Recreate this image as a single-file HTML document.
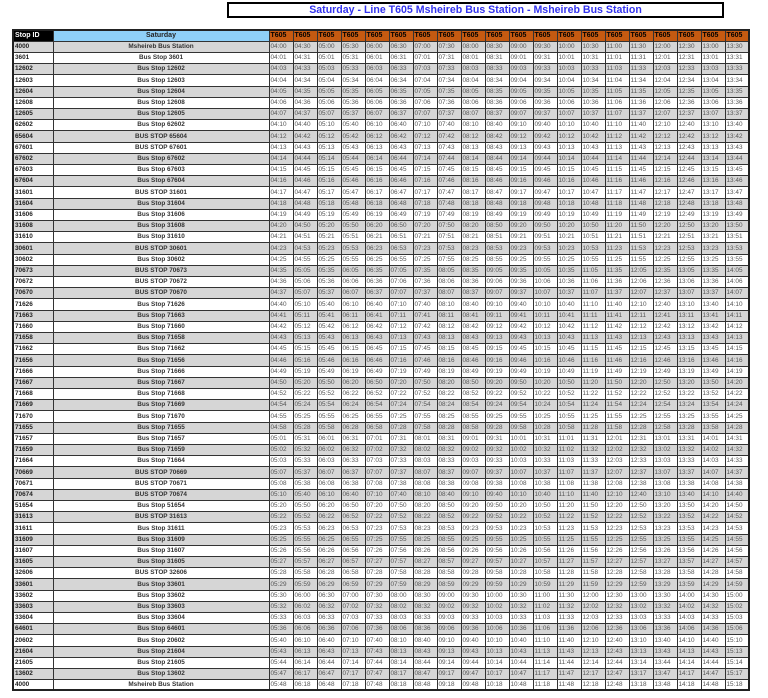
<!DOCTYPE html>
<html><head><meta charset="utf-8"><style>
*{margin:0;padding:0;box-sizing:border-box}
body{width:768px;height:698px;background:#fff;font-family:"Liberation Sans",Arial,sans-serif;position:relative;overflow:hidden}
.title{position:absolute;left:227px;top:2px;width:497px;height:16px;border:2px solid #000;color:#3333ee;font-weight:bold;font-size:10.6px;line-height:12px;text-align:center}
table{position:absolute;left:12px;top:29px;width:736px;border-collapse:collapse;table-layout:fixed;border:2px solid #222}
td{border:1px solid #333;height:11px;font-size:6.4px;line-height:9px;padding:0 1px;white-space:nowrap;overflow:hidden;color:#555}
tr:nth-child(5n) td{height:12px}
td:nth-child(1){font-weight:bold;color:#222}
td:nth-child(2){font-weight:bold;color:#333;text-align:center}
tr.g td{background:#d6d6d6}
tr.h td{height:11px;font-weight:bold;font-size:7px;color:#000;background:#c55a11}
tr.h td:nth-child(1){background:#000;color:#fff}
tr.h td:nth-child(2){background:#8fd0f8;color:#222}
</style></head><body>
<div class="title">Saturday - Line T605 Msheireb Bus Station - Msheireb Bus Station</div>
<table>
<colgroup><col style="width:40px"><col style="width:216px"><col span="20" style="width:24px"></colgroup>
<tr class="h"><td>Stop ID<td>Saturday<td>T605<td>T605<td>T605<td>T605<td>T605<td>T605<td>T605<td>T605<td>T605<td>T605<td>T605<td>T605<td>T605<td>T605<td>T605<td>T605<td>T605<td>T605<td>T605<td>T605
<tr class="g"><td>4000<td>Msheireb Bus Station<td>04:00<td>04:30<td>05:00<td>05:30<td>06:00<td>06:30<td>07:00<td>07:30<td>08:00<td>08:30<td>09:00<td>09:30<td>10:00<td>10:30<td>11:00<td>11:30<td>12:00<td>12:30<td>13:00<td>13:30
<tr><td>3601<td>Bus Stop 3601<td>04:01<td>04:31<td>05:01<td>05:31<td>06:01<td>06:31<td>07:01<td>07:31<td>08:01<td>08:31<td>09:01<td>09:31<td>10:01<td>10:31<td>11:01<td>11:31<td>12:01<td>12:31<td>13:01<td>13:31
<tr class="g"><td>12602<td>Bus Stop 12602<td>04:03<td>04:33<td>05:03<td>05:33<td>06:03<td>06:33<td>07:03<td>07:33<td>08:03<td>08:33<td>09:03<td>09:33<td>10:03<td>10:33<td>11:03<td>11:33<td>12:03<td>12:33<td>13:03<td>13:33
<tr><td>12603<td>Bus Stop 12603<td>04:04<td>04:34<td>05:04<td>05:34<td>06:04<td>06:34<td>07:04<td>07:34<td>08:04<td>08:34<td>09:04<td>09:34<td>10:04<td>10:34<td>11:04<td>11:34<td>12:04<td>12:34<td>13:04<td>13:34
<tr class="g"><td>12604<td>Bus Stop 12604<td>04:05<td>04:35<td>05:05<td>05:35<td>06:05<td>06:35<td>07:05<td>07:35<td>08:05<td>08:35<td>09:05<td>09:35<td>10:05<td>10:35<td>11:05<td>11:35<td>12:05<td>12:35<td>13:05<td>13:35
<tr><td>12608<td>Bus Stop 12608<td>04:06<td>04:36<td>05:06<td>05:36<td>06:06<td>06:36<td>07:06<td>07:36<td>08:06<td>08:36<td>09:06<td>09:36<td>10:06<td>10:36<td>11:06<td>11:36<td>12:06<td>12:36<td>13:06<td>13:36
<tr class="g"><td>12605<td>Bus Stop 12605<td>04:07<td>04:37<td>05:07<td>05:37<td>06:07<td>06:37<td>07:07<td>07:37<td>08:07<td>08:37<td>09:07<td>09:37<td>10:07<td>10:37<td>11:07<td>11:37<td>12:07<td>12:37<td>13:07<td>13:37
<tr><td>62602<td>Bus Stop 62602<td>04:10<td>04:40<td>05:10<td>05:40<td>06:10<td>06:40<td>07:10<td>07:40<td>08:10<td>08:40<td>09:10<td>09:40<td>10:10<td>10:40<td>11:10<td>11:40<td>12:10<td>12:40<td>13:10<td>13:40
<tr class="g"><td>65604<td>BUS STOP 65604<td>04:12<td>04:42<td>05:12<td>05:42<td>06:12<td>06:42<td>07:12<td>07:42<td>08:12<td>08:42<td>09:12<td>09:42<td>10:12<td>10:42<td>11:12<td>11:42<td>12:12<td>12:42<td>13:12<td>13:42
<tr><td>67601<td>BUS STOP 67601<td>04:13<td>04:43<td>05:13<td>05:43<td>06:13<td>06:43<td>07:13<td>07:43<td>08:13<td>08:43<td>09:13<td>09:43<td>10:13<td>10:43<td>11:13<td>11:43<td>12:13<td>12:43<td>13:13<td>13:43
<tr class="g"><td>67602<td>Bus Stop 67602<td>04:14<td>04:44<td>05:14<td>05:44<td>06:14<td>06:44<td>07:14<td>07:44<td>08:14<td>08:44<td>09:14<td>09:44<td>10:14<td>10:44<td>11:14<td>11:44<td>12:14<td>12:44<td>13:14<td>13:44
<tr><td>67603<td>Bus Stop 67603<td>04:15<td>04:45<td>05:15<td>05:45<td>06:15<td>06:45<td>07:15<td>07:45<td>08:15<td>08:45<td>09:15<td>09:45<td>10:15<td>10:45<td>11:15<td>11:45<td>12:15<td>12:45<td>13:15<td>13:45
<tr class="g"><td>67604<td>Bus Stop 67604<td>04:16<td>04:46<td>05:16<td>05:46<td>06:16<td>06:46<td>07:16<td>07:46<td>08:16<td>08:46<td>09:16<td>09:46<td>10:16<td>10:46<td>11:16<td>11:46<td>12:16<td>12:46<td>13:16<td>13:46
<tr><td>31601<td>BUS STOP 31601<td>04:17<td>04:47<td>05:17<td>05:47<td>06:17<td>06:47<td>07:17<td>07:47<td>08:17<td>08:47<td>09:17<td>09:47<td>10:17<td>10:47<td>11:17<td>11:47<td>12:17<td>12:47<td>13:17<td>13:47
<tr class="g"><td>31604<td>Bus Stop 31604<td>04:18<td>04:48<td>05:18<td>05:48<td>06:18<td>06:48<td>07:18<td>07:48<td>08:18<td>08:48<td>09:18<td>09:48<td>10:18<td>10:48<td>11:18<td>11:48<td>12:18<td>12:48<td>13:18<td>13:48
<tr><td>31606<td>Bus Stop 31606<td>04:19<td>04:49<td>05:19<td>05:49<td>06:19<td>06:49<td>07:19<td>07:49<td>08:19<td>08:49<td>09:19<td>09:49<td>10:19<td>10:49<td>11:19<td>11:49<td>12:19<td>12:49<td>13:19<td>13:49
<tr class="g"><td>31608<td>Bus Stop 31608<td>04:20<td>04:50<td>05:20<td>05:50<td>06:20<td>06:50<td>07:20<td>07:50<td>08:20<td>08:50<td>09:20<td>09:50<td>10:20<td>10:50<td>11:20<td>11:50<td>12:20<td>12:50<td>13:20<td>13:50
<tr><td>31610<td>Bus Stop 31610<td>04:21<td>04:51<td>05:21<td>05:51<td>06:21<td>06:51<td>07:21<td>07:51<td>08:21<td>08:51<td>09:21<td>09:51<td>10:21<td>10:51<td>11:21<td>11:51<td>12:21<td>12:51<td>13:21<td>13:51
<tr class="g"><td>30601<td>BUS STOP 30601<td>04:23<td>04:53<td>05:23<td>05:53<td>06:23<td>06:53<td>07:23<td>07:53<td>08:23<td>08:53<td>09:23<td>09:53<td>10:23<td>10:53<td>11:23<td>11:53<td>12:23<td>12:53<td>13:23<td>13:53
<tr><td>30602<td>Bus Stop 30602<td>04:25<td>04:55<td>05:25<td>05:55<td>06:25<td>06:55<td>07:25<td>07:55<td>08:25<td>08:55<td>09:25<td>09:55<td>10:25<td>10:55<td>11:25<td>11:55<td>12:25<td>12:55<td>13:25<td>13:55
<tr class="g"><td>70673<td>BUS STOP 70673<td>04:35<td>05:05<td>05:35<td>06:05<td>06:35<td>07:05<td>07:35<td>08:05<td>08:35<td>09:05<td>09:35<td>10:05<td>10:35<td>11:05<td>11:35<td>12:05<td>12:35<td>13:05<td>13:35<td>14:05
<tr><td>70672<td>BUS STOP 70672<td>04:36<td>05:06<td>05:36<td>06:06<td>06:36<td>07:06<td>07:36<td>08:06<td>08:36<td>09:06<td>09:36<td>10:06<td>10:36<td>11:06<td>11:36<td>12:06<td>12:36<td>13:06<td>13:36<td>14:06
<tr class="g"><td>70670<td>BUS STOP 70670<td>04:37<td>05:07<td>05:37<td>06:07<td>06:37<td>07:07<td>07:37<td>08:07<td>08:37<td>09:07<td>09:37<td>10:07<td>10:37<td>11:07<td>11:37<td>12:07<td>12:37<td>13:07<td>13:37<td>14:07
<tr><td>71626<td>Bus Stop 71626<td>04:40<td>05:10<td>05:40<td>06:10<td>06:40<td>07:10<td>07:40<td>08:10<td>08:40<td>09:10<td>09:40<td>10:10<td>10:40<td>11:10<td>11:40<td>12:10<td>12:40<td>13:10<td>13:40<td>14:10
<tr class="g"><td>71663<td>Bus Stop 71663<td>04:41<td>05:11<td>05:41<td>06:11<td>06:41<td>07:11<td>07:41<td>08:11<td>08:41<td>09:11<td>09:41<td>10:11<td>10:41<td>11:11<td>11:41<td>12:11<td>12:41<td>13:11<td>13:41<td>14:11
<tr><td>71660<td>Bus Stop 71660<td>04:42<td>05:12<td>05:42<td>06:12<td>06:42<td>07:12<td>07:42<td>08:12<td>08:42<td>09:12<td>09:42<td>10:12<td>10:42<td>11:12<td>11:42<td>12:12<td>12:42<td>13:12<td>13:42<td>14:12
<tr class="g"><td>71658<td>Bus Stop 71658<td>04:43<td>05:13<td>05:43<td>06:13<td>06:43<td>07:13<td>07:43<td>08:13<td>08:43<td>09:13<td>09:43<td>10:13<td>10:43<td>11:13<td>11:43<td>12:13<td>12:43<td>13:13<td>13:43<td>14:13
<tr><td>71662<td>Bus Stop 71662<td>04:45<td>05:15<td>05:45<td>06:15<td>06:45<td>07:15<td>07:45<td>08:15<td>08:45<td>09:15<td>09:45<td>10:15<td>10:45<td>11:15<td>11:45<td>12:15<td>12:45<td>13:15<td>13:45<td>14:15
<tr class="g"><td>71656<td>Bus Stop 71656<td>04:46<td>05:16<td>05:46<td>06:16<td>06:46<td>07:16<td>07:46<td>08:16<td>08:46<td>09:16<td>09:46<td>10:16<td>10:46<td>11:16<td>11:46<td>12:16<td>12:46<td>13:16<td>13:46<td>14:16
<tr><td>71666<td>Bus Stop 71666<td>04:49<td>05:19<td>05:49<td>06:19<td>06:49<td>07:19<td>07:49<td>08:19<td>08:49<td>09:19<td>09:49<td>10:19<td>10:49<td>11:19<td>11:49<td>12:19<td>12:49<td>13:19<td>13:49<td>14:19
<tr class="g"><td>71667<td>Bus Stop 71667<td>04:50<td>05:20<td>05:50<td>06:20<td>06:50<td>07:20<td>07:50<td>08:20<td>08:50<td>09:20<td>09:50<td>10:20<td>10:50<td>11:20<td>11:50<td>12:20<td>12:50<td>13:20<td>13:50<td>14:20
<tr><td>71668<td>Bus Stop 71668<td>04:52<td>05:22<td>05:52<td>06:22<td>06:52<td>07:22<td>07:52<td>08:22<td>08:52<td>09:22<td>09:52<td>10:22<td>10:52<td>11:22<td>11:52<td>12:22<td>12:52<td>13:22<td>13:52<td>14:22
<tr class="g"><td>71669<td>Bus Stop 71669<td>04:54<td>05:24<td>05:54<td>06:24<td>06:54<td>07:24<td>07:54<td>08:24<td>08:54<td>09:24<td>09:54<td>10:24<td>10:54<td>11:24<td>11:54<td>12:24<td>12:54<td>13:24<td>13:54<td>14:24
<tr><td>71670<td>Bus Stop 71670<td>04:55<td>05:25<td>05:55<td>06:25<td>06:55<td>07:25<td>07:55<td>08:25<td>08:55<td>09:25<td>09:55<td>10:25<td>10:55<td>11:25<td>11:55<td>12:25<td>12:55<td>13:25<td>13:55<td>14:25
<tr class="g"><td>71655<td>Bus Stop 71655<td>04:58<td>05:28<td>05:58<td>06:28<td>06:58<td>07:28<td>07:58<td>08:28<td>08:58<td>09:28<td>09:58<td>10:28<td>10:58<td>11:28<td>11:58<td>12:28<td>12:58<td>13:28<td>13:58<td>14:28
<tr><td>71657<td>Bus Stop 71657<td>05:01<td>05:31<td>06:01<td>06:31<td>07:01<td>07:31<td>08:01<td>08:31<td>09:01<td>09:31<td>10:01<td>10:31<td>11:01<td>11:31<td>12:01<td>12:31<td>13:01<td>13:31<td>14:01<td>14:31
<tr class="g"><td>71659<td>Bus Stop 71659<td>05:02<td>05:32<td>06:02<td>06:32<td>07:02<td>07:32<td>08:02<td>08:32<td>09:02<td>09:32<td>10:02<td>10:32<td>11:02<td>11:32<td>12:02<td>12:32<td>13:02<td>13:32<td>14:02<td>14:32
<tr><td>71664<td>Bus Stop 71664<td>05:03<td>05:33<td>06:03<td>06:33<td>07:03<td>07:33<td>08:03<td>08:33<td>09:03<td>09:33<td>10:03<td>10:33<td>11:03<td>11:33<td>12:03<td>12:33<td>13:03<td>13:33<td>14:03<td>14:33
<tr class="g"><td>70669<td>BUS STOP 70669<td>05:07<td>05:37<td>06:07<td>06:37<td>07:07<td>07:37<td>08:07<td>08:37<td>09:07<td>09:37<td>10:07<td>10:37<td>11:07<td>11:37<td>12:07<td>12:37<td>13:07<td>13:37<td>14:07<td>14:37
<tr><td>70671<td>BUS STOP 70671<td>05:08<td>05:38<td>06:08<td>06:38<td>07:08<td>07:38<td>08:08<td>08:38<td>09:08<td>09:38<td>10:08<td>10:38<td>11:08<td>11:38<td>12:08<td>12:38<td>13:08<td>13:38<td>14:08<td>14:38
<tr class="g"><td>70674<td>BUS STOP 70674<td>05:10<td>05:40<td>06:10<td>06:40<td>07:10<td>07:40<td>08:10<td>08:40<td>09:10<td>09:40<td>10:10<td>10:40<td>11:10<td>11:40<td>12:10<td>12:40<td>13:10<td>13:40<td>14:10<td>14:40
<tr><td>51654<td>Bus Stop 51654<td>05:20<td>05:50<td>06:20<td>06:50<td>07:20<td>07:50<td>08:20<td>08:50<td>09:20<td>09:50<td>10:20<td>10:50<td>11:20<td>11:50<td>12:20<td>12:50<td>13:20<td>13:50<td>14:20<td>14:50
<tr class="g"><td>31613<td>BUS STOP 31613<td>05:22<td>05:52<td>06:22<td>06:52<td>07:22<td>07:52<td>08:22<td>08:52<td>09:22<td>09:52<td>10:22<td>10:52<td>11:22<td>11:52<td>12:22<td>12:52<td>13:22<td>13:52<td>14:22<td>14:52
<tr><td>31611<td>Bus Stop 31611<td>05:23<td>05:53<td>06:23<td>06:53<td>07:23<td>07:53<td>08:23<td>08:53<td>09:23<td>09:53<td>10:23<td>10:53<td>11:23<td>11:53<td>12:23<td>12:53<td>13:23<td>13:53<td>14:23<td>14:53
<tr class="g"><td>31609<td>Bus Stop 31609<td>05:25<td>05:55<td>06:25<td>06:55<td>07:25<td>07:55<td>08:25<td>08:55<td>09:25<td>09:55<td>10:25<td>10:55<td>11:25<td>11:55<td>12:25<td>12:55<td>13:25<td>13:55<td>14:25<td>14:55
<tr><td>31607<td>Bus Stop 31607<td>05:26<td>05:56<td>06:26<td>06:56<td>07:26<td>07:56<td>08:26<td>08:56<td>09:26<td>09:56<td>10:26<td>10:56<td>11:26<td>11:56<td>12:26<td>12:56<td>13:26<td>13:56<td>14:26<td>14:56
<tr class="g"><td>31605<td>Bus Stop 31605<td>05:27<td>05:57<td>06:27<td>06:57<td>07:27<td>07:57<td>08:27<td>08:57<td>09:27<td>09:57<td>10:27<td>10:57<td>11:27<td>11:57<td>12:27<td>12:57<td>13:27<td>13:57<td>14:27<td>14:57
<tr><td>32606<td>BUS STOP 32606<td>05:28<td>05:58<td>06:28<td>06:58<td>07:28<td>07:58<td>08:28<td>08:58<td>09:28<td>09:58<td>10:28<td>10:58<td>11:28<td>11:58<td>12:28<td>12:58<td>13:28<td>13:58<td>14:28<td>14:58
<tr class="g"><td>33601<td>Bus Stop 33601<td>05:29<td>05:59<td>06:29<td>06:59<td>07:29<td>07:59<td>08:29<td>08:59<td>09:29<td>09:59<td>10:29<td>10:59<td>11:29<td>11:59<td>12:29<td>12:59<td>13:29<td>13:59<td>14:29<td>14:59
<tr><td>33602<td>Bus Stop 33602<td>05:30<td>06:00<td>06:30<td>07:00<td>07:30<td>08:00<td>08:30<td>09:00<td>09:30<td>10:00<td>10:30<td>11:00<td>11:30<td>12:00<td>12:30<td>13:00<td>13:30<td>14:00<td>14:30<td>15:00
<tr class="g"><td>33603<td>Bus Stop 33603<td>05:32<td>06:02<td>06:32<td>07:02<td>07:32<td>08:02<td>08:32<td>09:02<td>09:32<td>10:02<td>10:32<td>11:02<td>11:32<td>12:02<td>12:32<td>13:02<td>13:32<td>14:02<td>14:32<td>15:02
<tr><td>33604<td>Bus Stop 33604<td>05:33<td>06:03<td>06:33<td>07:03<td>07:33<td>08:03<td>08:33<td>09:03<td>09:33<td>10:03<td>10:33<td>11:03<td>11:33<td>12:03<td>12:33<td>13:03<td>13:33<td>14:03<td>14:33<td>15:03
<tr class="g"><td>64601<td>Bus Stop 64601<td>05:36<td>06:06<td>06:36<td>07:06<td>07:36<td>08:06<td>08:36<td>09:06<td>09:36<td>10:06<td>10:36<td>11:06<td>11:36<td>12:06<td>12:36<td>13:06<td>13:36<td>14:06<td>14:36<td>15:06
<tr><td>20602<td>Bus Stop 20602<td>05:40<td>06:10<td>06:40<td>07:10<td>07:40<td>08:10<td>08:40<td>09:10<td>09:40<td>10:10<td>10:40<td>11:10<td>11:40<td>12:10<td>12:40<td>13:10<td>13:40<td>14:10<td>14:40<td>15:10
<tr class="g"><td>21604<td>Bus Stop 21604<td>05:43<td>06:13<td>06:43<td>07:13<td>07:43<td>08:13<td>08:43<td>09:13<td>09:43<td>10:13<td>10:43<td>11:13<td>11:43<td>12:13<td>12:43<td>13:13<td>13:43<td>14:13<td>14:43<td>15:13
<tr><td>21605<td>Bus Stop 21605<td>05:44<td>06:14<td>06:44<td>07:14<td>07:44<td>08:14<td>08:44<td>09:14<td>09:44<td>10:14<td>10:44<td>11:14<td>11:44<td>12:14<td>12:44<td>13:14<td>13:44<td>14:14<td>14:44<td>15:14
<tr class="g"><td>13602<td>Bus Stop 13602<td>05:47<td>06:17<td>06:47<td>07:17<td>07:47<td>08:17<td>08:47<td>09:17<td>09:47<td>10:17<td>10:47<td>11:17<td>11:47<td>12:17<td>12:47<td>13:17<td>13:47<td>14:17<td>14:47<td>15:17
<tr><td>4000<td>Msheireb Bus Station<td>05:48<td>06:18<td>06:48<td>07:18<td>07:48<td>08:18<td>08:48<td>09:18<td>09:48<td>10:18<td>10:48<td>11:18<td>11:48<td>12:18<td>12:48<td>13:18<td>13:48<td>14:18<td>14:48<td>15:18
</table>
</body></html>
